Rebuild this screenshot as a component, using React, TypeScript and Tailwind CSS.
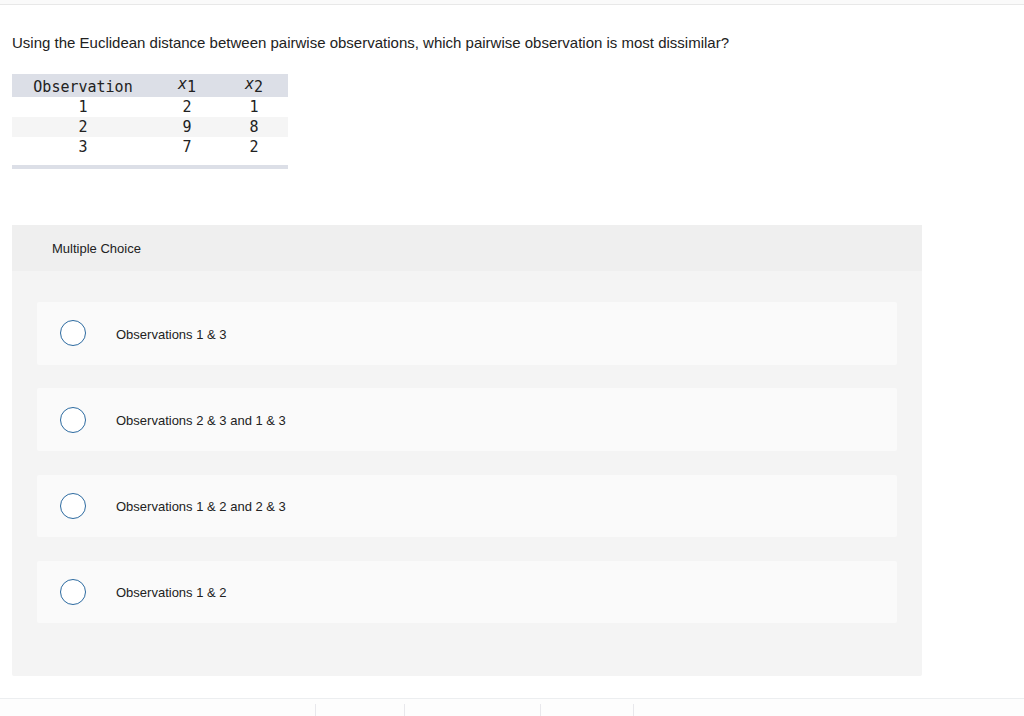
const options = [
  'Observations 1 & 3',
  'Observations 2 & 3 and 1 & 3',
  'Observations 1 & 2 and 2 & 3',
  'Observations 1 & 2',
]

const rows = [
  [1, 2, 1],
  [2, 9, 8],
  [3, 7, 2],
]

export default function App() {
  return (
    <div className="w-[1024px] h-[716px] bg-white flex flex-col text-[#222]" style={{ fontFamily: '"Liberation Sans", Arial, sans-serif' }}>
      <div className="h-[5px] bg-[#fafafa] border-b border-[#e8e8e8]" />

      <div className="flex-1 px-3">
        <p className="mt-[29px] text-[15px] leading-[18px]">
          Using the Euclidean distance between pairwise observations, which pairwise observation is most dissimilar?
        </p>

        {/* Data table */}
        <div className="mt-[22px] w-[276px] font-['DejaVu_Sans_Mono',monospace] text-[15px] text-[#222]">
          <div className="flex h-[23px] pt-[4px] leading-[18px] bg-[#dcdfe7]">
            <div className="w-[142px] text-center">Observation</div>
            <div className="w-[66px] text-center"><i className="relative -top-[3px]">x</i>1</div>
            <div className="w-[68px] text-center"><i className="relative -top-[3px]">x</i>2</div>
          </div>
          {rows.map((r, i) => (
            <div key={i} className={`flex h-[20px] items-center ${i === 1 ? 'bg-[#f5f5f5]' : ''}`}>
              <div className="w-[142px] text-center">{r[0]}</div>
              <div className="w-[66px] text-center">{r[1]}</div>
              <div className="w-[68px] text-center">{r[2]}</div>
            </div>
          ))}
          <div className="mt-[8px] h-[4px] bg-[#dcdfe7]" />
        </div>

        {/* Multiple choice */}
        <div className="mt-[56px] w-[910px] h-[451px] bg-[#f4f4f4] rounded-[2px] flex flex-col">
          <div className="h-[46px] shrink-0 bg-[#efefef] flex items-center pl-[40px] pt-[2px] text-[13px]">Multiple Choice</div>
          <div className="flex flex-col gap-[23.8px] px-[25px] pt-[31px]">
            {options.map(o => (
              <div key={o} className="h-[62.5px] shrink-0 bg-[#fafafa] rounded-[2px] flex items-center">
                <span className="ml-[23px] w-[26px] h-[26px] rounded-full border border-[#2c6aa0] bg-white" />
                <span className="ml-[30px] pt-[2px] text-[13px]">{o}</span>
              </div>
            ))}
          </div>
        </div>
      </div>

      <div className="h-[18px] border-t border-[#eceef0] bg-[#fdfdfd] flex pt-[5px]">
        <div className="ml-[315px] w-px h-[13px] bg-[#e8e8ec]" />
        <div className="ml-[88px] w-px h-[13px] bg-[#e8e8ec]" />
        <div className="ml-[135px] w-px h-[13px] bg-[#e8e8ec]" />
        <div className="ml-[92px] w-px h-[13px] bg-[#e8e8ec]" />
      </div>
    </div>
  )
}
